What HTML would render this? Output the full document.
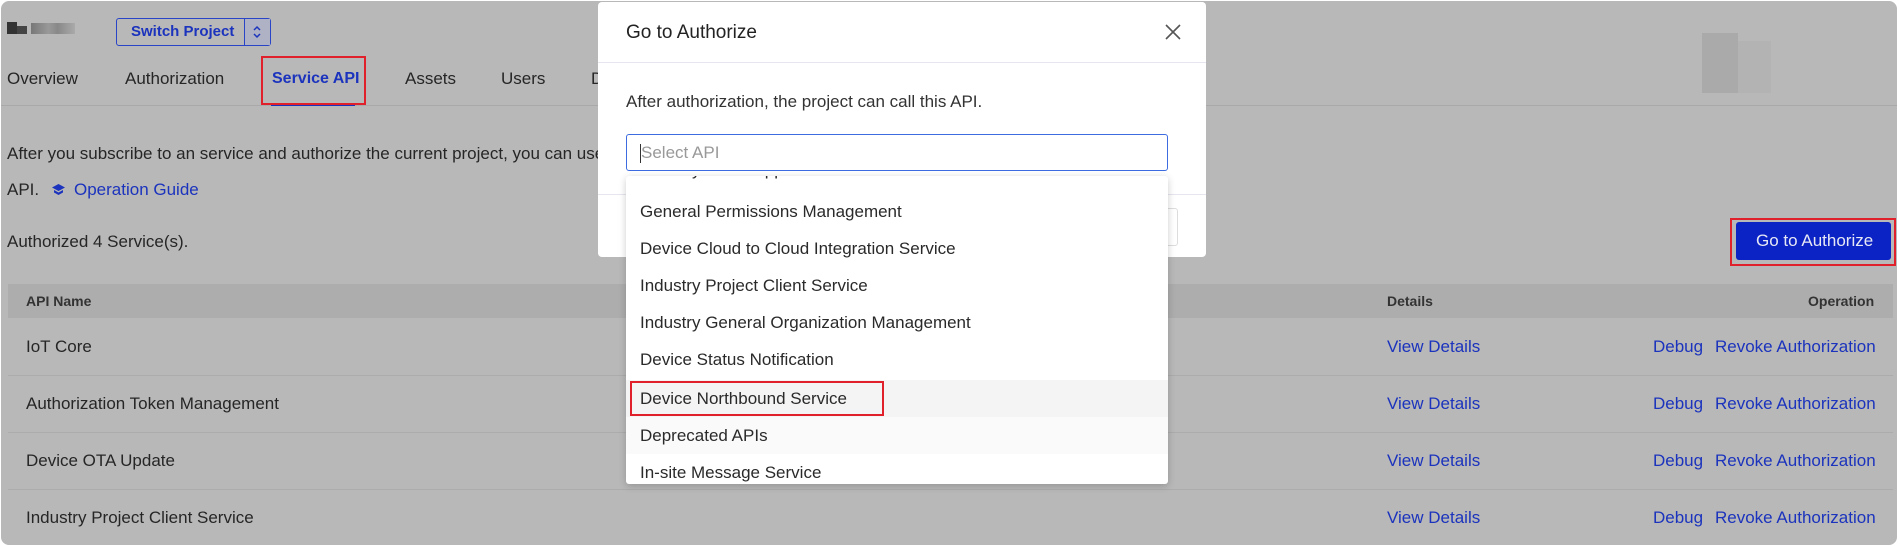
<!DOCTYPE html>
<html><head><meta charset="utf-8"><style>
*{margin:0;padding:0;box-sizing:border-box}
body{width:1900px;height:546px;background:#fff;font-family:"Liberation Sans",sans-serif;position:relative;overflow:hidden;color:#262626}
.page{position:absolute;left:1px;top:1px;width:1896px;height:544px;background:#b8b8b8;border-radius:8px;overflow:hidden}
.a{position:absolute;white-space:nowrap}
.t{font-size:17px;line-height:20px}
.link{color:#1b33bd}
.row{position:absolute;left:7px;width:1885px;height:1px;background:#acacac}
.dd{position:absolute;left:0;width:542px;height:37px}
.dd span{position:absolute;left:14px;top:9px;font-size:17px;color:#2a2a2a}
</style></head><body>
<div class="page">
  <div class="a" style="left:6px;top:21px;width:10px;height:12px;background:#333"></div>
  <div class="a" style="left:16px;top:25px;width:10px;height:8px;background:#444"></div>
  <div class="a" style="left:30px;top:22px;width:44px;height:11px;background:linear-gradient(90deg,#777,#999 40%,#888 60%,#aaa)"></div>
  <div class="a" style="left:115px;top:17px;width:155px;height:28px;border:1px solid #2a44c8;border-radius:3px"></div>
  <div class="a" style="left:130px;top:21px;font-size:15px;line-height:20px;color:#1b33bd;font-weight:bold">Switch Project</div>
  <div class="a" style="left:243px;top:18px;width:1px;height:26px;background:#2a44c8"></div>
  <div class="a" style="left:244px;top:18px;width:25px;height:26px;background:#aeb2c4"></div>
  <svg class="a" style="left:250px;top:23px" width="12" height="16" viewBox="0 0 12 16"><path d="M3 6 L6 3 L9 6 M3 10 L6 13 L9 10" fill="none" stroke="#1b33bd" stroke-width="1.5"/></svg>
  <div class="a t" style="left:6px;top:68px">Overview</div>
  <div class="a t" style="left:124px;top:68px">Authorization</div>
  <div class="a" style="left:271px;top:68px;font-size:16px;line-height:20px;color:#1b33bd;font-weight:bold">Service API</div>
  <div class="a t" style="left:404px;top:68px">Assets</div>
  <div class="a t" style="left:500px;top:68px">Users</div>
  <div class="a t" style="left:590px;top:68px">D</div>
  <div class="a" style="left:0;top:104px;width:1896px;height:1px;background:#a9a9a9"></div>
  <div class="a" style="left:270px;top:102px;width:84px;height:3px;background:#1b33bd"></div>
  <div class="a" style="left:260px;top:55px;width:105px;height:49px;border:2px solid #e0202a"></div>
  <div class="a" style="left:1701px;top:32px;width:36px;height:60px;background:#aaa"></div>
  <div class="a" style="left:1737px;top:40px;width:33px;height:52px;background:#b3b3b3"></div>
  <div class="a t" style="left:6px;top:143px">After you subscribe to an service and authorize the current project, you can use</div>
  <div class="a t" style="left:6px;top:179px">API.</div>
  <svg class="a" style="left:50px;top:182px" width="15" height="14" viewBox="0 0 15 14"><path d="M7.5 1 L14 4.5 L7.5 8 L1 4.5Z M3 7 L3 9.5 L7.5 12 L12 9.5 L12 7 L7.5 9.5Z" fill="#1b33bd"/></svg>
  <div class="a t link" style="left:73px;top:179px">Operation Guide</div>
  <div class="a t" style="left:6px;top:231px">Authorized 4 Service(s).</div>
  <div class="a" style="left:1735px;top:221px;width:155px;height:38px;background:#0b22c4;border-radius:3px"></div>
  <div class="a t" style="left:1755px;top:230px;color:#e6e8f5">Go to Authorize</div>
  <div class="a" style="left:1729px;top:217px;width:166px;height:48px;border:2px solid #e0202a"></div>
  <div class="a" style="left:7px;top:283px;width:1885px;height:34px;background:#adadad"></div>
  <div class="a" style="left:25px;top:292px;font-size:14px;font-weight:bold;color:#333">API Name</div>
  <div class="a" style="left:1386px;top:292px;font-size:14px;font-weight:bold;color:#333">Details</div>
  <div class="a" style="left:1807px;top:292px;font-size:14px;font-weight:bold;color:#333">Operation</div>
  <div class="row" style="top:374px"></div><div class="row" style="top:431px"></div><div class="row" style="top:488px"></div>
  <div class="a t" style="left:25px;top:336px">IoT Core</div>
  <div class="a t" style="left:25px;top:393px">Authorization Token Management</div>
  <div class="a t" style="left:25px;top:450px">Device OTA Update</div>
  <div class="a t" style="left:25px;top:507px">Industry Project Client Service</div>
  <div class="a t link" style="left:1386px;top:336px">View Details</div>
  <div class="a t link" style="left:1386px;top:393px">View Details</div>
  <div class="a t link" style="left:1386px;top:450px">View Details</div>
  <div class="a t link" style="left:1386px;top:507px">View Details</div>
  <div class="a t link" style="left:1652px;top:336px">Debug</div><div class="a t link" style="left:1714px;top:336px">Revoke Authorization</div>
  <div class="a t link" style="left:1652px;top:393px">Debug</div><div class="a t link" style="left:1714px;top:393px">Revoke Authorization</div>
  <div class="a t link" style="left:1652px;top:450px">Debug</div><div class="a t link" style="left:1714px;top:450px">Revoke Authorization</div>
  <div class="a t link" style="left:1652px;top:507px">Debug</div><div class="a t link" style="left:1714px;top:507px">Revoke Authorization</div>
</div>
<div class="a" style="left:598px;top:2px;width:608px;height:255px;background:#fff;border-radius:4px"></div>
<div class="a" style="left:626px;top:22px;font-size:19px;color:#222">Go to Authorize</div>
<svg class="a" style="left:1165px;top:24px" width="16" height="16" viewBox="0 0 16 16"><path d="M1 1 L15 15 M15 1 L1 15" stroke="#555" stroke-width="1.6"/></svg>
<div class="a" style="left:598px;top:62px;width:608px;height:1px;background:#e6e6ee"></div>
<div class="a t" style="left:626px;top:92px;color:#333">After authorization, the project can call this API.</div>
<div class="a" style="left:626px;top:134px;width:542px;height:37px;border:1.5px solid #3d6be0;border-radius:3px"></div>
<div class="a" style="left:640px;top:144px;width:1px;height:19px;background:#333"></div>
<div class="a t" style="left:641px;top:143px;color:#999">Select API</div>
<div class="a" style="left:598px;top:194px;width:608px;height:1px;background:#e6e6ee"></div>
<div class="a" style="left:1150px;top:208px;width:28px;height:38px;border:1px solid #ddd;border-radius:3px"></div>
<div class="a" style="left:626px;top:176px;width:542px;height:308px;background:#fff;box-shadow:0 2px 8px rgba(0,0,0,.2);border-radius:3px;overflow:hidden">
  <div class="dd" style="top:-25px"><span>Industry Cloud Application</span></div>
  <div class="dd" style="top:17px"><span>General Permissions Management</span></div>
  <div class="dd" style="top:54px"><span>Device Cloud to Cloud Integration Service</span></div>
  <div class="dd" style="top:91px"><span>Industry Project Client Service</span></div>
  <div class="dd" style="top:128px"><span>Industry General Organization Management</span></div>
  <div class="dd" style="top:165px"><span>Device Status Notification</span></div>
  <div class="dd" style="top:204px;background:#f4f4f4"><span>Device Northbound Service</span></div>
  <div class="dd" style="top:241px;background:#fafafa"><span>Deprecated APIs</span></div>
  <div class="dd" style="top:278px"><span>In-site Message Service</span></div>
</div>
<div class="a" style="left:630px;top:381px;width:254px;height:35px;border:2px solid #e0202a"></div>
</body></html>
